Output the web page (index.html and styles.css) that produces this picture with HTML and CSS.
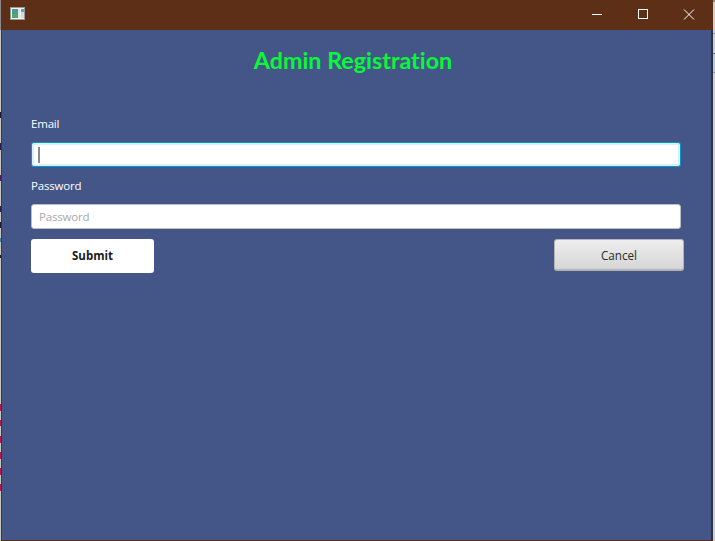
FILE: index.html
```html
<!DOCTYPE html>
<html lang="en">
<head>
<meta charset="utf-8">
<title>Admin Registration</title>
<link rel="stylesheet" href="styles.css">
</head>
<body>
<div class="desk">
  <div class="edge-left"></div>
  <div class="window">
    <header class="titlebar">
      <svg class="app-icon" width="16" height="14" viewBox="0 0 16 14">
        <rect x="0.5" y="0.5" width="14" height="12" fill="#f2f2f2" stroke="#9a9a9a"/>
        <rect x="2" y="2" width="6" height="9" fill="#4f9a8e"/>
        <rect x="2" y="7" width="6" height="4" fill="#4cab6e"/>
        <rect x="8" y="2" width="2" height="9" fill="#e6e6e6"/>
        <rect x="11" y="2" width="3" height="3" fill="#5aa7b5"/>
        <rect x="11" y="5" width="3" height="6" fill="#d9d9d9"/>
      </svg>
      <div class="controls">
        <svg class="ctl" width="46" height="30" viewBox="0 0 46 30"><path d="M18 14.500H28" stroke="#fff" fill="none"/></svg>
        <svg class="ctl" width="46" height="30" viewBox="0 0 46 30"><rect x="18.500" y="9.500" width="9" height="9" stroke="#fff" fill="none"/></svg>
        <svg class="ctl" width="46" height="30" viewBox="0 0 46 30"><path d="M18 9.500L28 19.500M28 9.500L18 19.500" stroke="#fff" fill="none"/></svg>
      </div>
    </header>
    <main class="content">
      <h1 class="heading">Admin Registration</h1>
      <form class="form">
        <label class="label label-email">Email</label>
        <div class="input input-focus"><span class="caret"></span></div>
        <label class="label label-pass">Password</label>
        <div class="input"><span class="placeholder">Password</span></div>
        <div class="actions">
          <button type="button" class="btn-submit">Submit</button>
          <button type="button" class="btn-cancel">Cancel</button>
        </div>
      </form>
    </main>
  </div>
  <div class="edge-right"></div>
</div>
</body>
</html>
```
FILE: styles.css
```css
* { box-sizing: border-box; }
html, body { margin: 0; padding: 0; }
body { width: 715px; height: 541px; overflow: hidden; font-family: "Open Sans", "Noto Sans", sans-serif; }
.desk { display: flex; width: 715px; height: 541px; background: #5d2f17; }
.edge-left {
  width: 1px;
  background: linear-gradient(to bottom,
    #8a8a8a 0 30px, #c9c5bf 30px 112px, #1c1c2a 112px 118px, #c9c5bf 118px 143px,
    #2a1c4a 143px 150px, #c9c5bf 150px 175px, #4a1c5a 175px 181px, #c9c5bf 181px 206px,
    #2a1c4a 206px 212px, #c9c5bf 212px 222px, #1c1c2a 222px 228px, #c9c5bf 228px 238px,
    #3a8ab0 238px 242px, #c9c5bf 242px 255px, #1c1c2a 255px 258px, #c9c5bf 258px 404px,
    #b0174e 404px 411px, #c9c5bf 411px 420px, #b0174e 420px 426px, #c9c5bf 426px 436px,
    #b0174e 436px 443px, #c9c5bf 443px 452px, #b0174e 452px 459px, #c9c5bf 459px 468px,
    #b0174e 468px 475px, #c9c5bf 475px 484px, #b0174e 484px 491px, #c9c5bf 491px 541px);
}
.window {
  flex: 1;
  display: flex;
  flex-direction: column;
  border-left: 1px solid #5d2f17;
  border-bottom: 1px solid #5d2f17;
  min-width: 0;
}
.edge-right {
  width: 2px;
  background: linear-gradient(to bottom,
    #8f8f8f 0 2px, #cfcfcf 2px 33px, #8f8f8f 33px 34px, #cfcfcf 34px 53px,
    #4f6f8f 53px 54px, #b8c8d8 54px 72px, #8f8f8f 72px 73px, #d0d0d0 73px 541px);
}
.titlebar {
  height: 30px;
  flex: none;
  background: #5d2f17;
  display: flex;
  align-items: flex-start;
  justify-content: space-between;
  padding-left: 8px;
  padding-right: 1px;
}
.app-icon { margin-top: 7px; }
.controls { display: flex; }
.ctl { display: block; }
.content {
  flex: 1;
  background: #445588;
  padding: 0 27px 0 29px;
  border-right: 2px solid #2e3346;
}
.heading {
  margin: 14px 0 0;
  height: 32px;
  line-height: 32px;
  text-align: center;
  font-family: Lato, sans-serif;
  font-size: 23.300px;
  font-weight: 700;
  font-variant-ligatures: none;
  color: #08f83a;
  padding-right: 9px;
}
.form { display: flex; flex-direction: column; }
.label { display: block; color: #fff; font-size: 11.500px; letter-spacing: -0.2px; line-height: 16px; }
.label-email { margin-top: 40px; }
.label-pass { margin-top: 11px; }
.input {
  margin-top: 10px;
  width: 650px;
  height: 25px;
  background: #fff;
  border: 1px solid #bdbdbd;
  border-radius: 3px;
  padding-left: 7px;
  display: flex;
  align-items: center;
}
.input-focus {
  border: 1px solid #0096c9;
  box-shadow: inset 0 0 0 2px #d7f0fa;
}
.caret { width: 2px; height: 16px; background: #8a8a8a; margin-left: -1px; }
.placeholder { color: #a9a9a9; font-size: 11.500px; letter-spacing: -0.2px; }
.actions { display: flex; justify-content: space-between; align-items: flex-start; margin-top: 10px; width: 653px; }
.btn-submit {
  width: 123px;
  height: 34px;
  background: #fff;
  border: 0;
  border-radius: 3px;
  font-family: "Open Sans", sans-serif;
  font-size: 11.500px;
  font-weight: 700;
  color: #1a1a1a;
  padding: 0 0 2px;
}
.btn-cancel {
  width: 130px;
  height: 32px;
  background: linear-gradient(to bottom, #eeeeee, #d6d6d6);
  border: 1px solid #b4b4b4;
  border-bottom-width: 2px;
  border-radius: 3px;
  font-family: "Open Sans", sans-serif;
  font-size: 11.700px;
  color: #2a2a2a;
  padding: 0;
}
```
